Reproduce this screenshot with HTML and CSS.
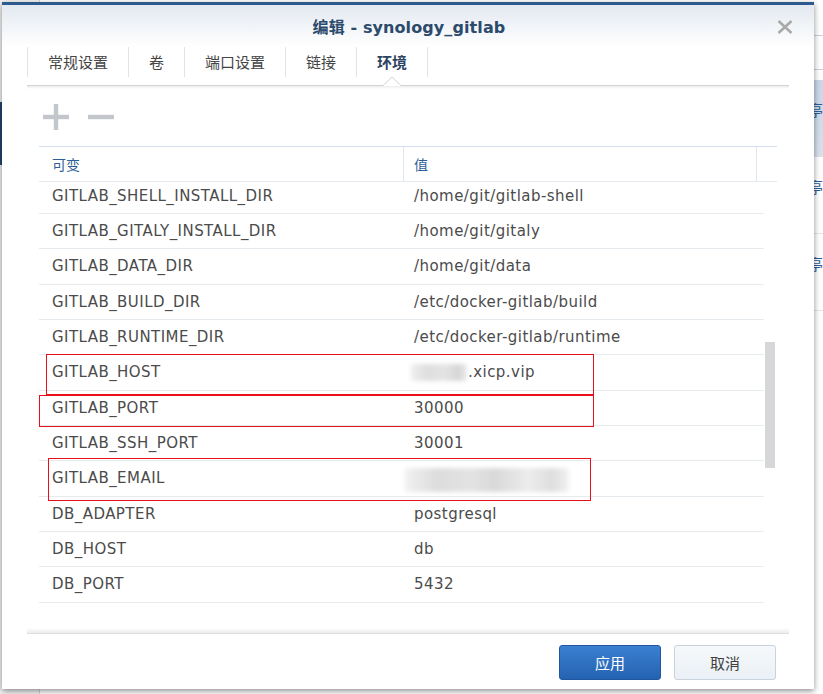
FILE: index.html
```html
<!DOCTYPE html>
<html lang="zh-CN">
<head>
<meta charset="utf-8">
<title>编辑 - synology_gitlab</title>
<link rel="stylesheet" href="styles.css">
</head>
<body>
<div class="bgpage">
  <div class="bg-side"><div class="bg-side-mark"></div></div>
  <div class="bg-main">
    <div class="bg-search"></div>
    <div class="bg-list">
      <div class="bg-row bg-row-sel">亭</div>
      <div class="bg-row">亭</div>
      <div class="bg-row">亭</div>
    </div>
  </div>
</div>

<div class="dialog">
  <div class="titlebar">
    <span></span>
    <div class="title">编辑 - synology_gitlab</div>
    <div class="close">
      <svg width="16" height="14" viewBox="0 0 16 14"><path d="M1.5 1 L14.5 13 M14.5 1 L1.5 13" stroke="#a9a9a9" stroke-width="2.6" fill="none"/></svg>
    </div>
  </div>

  <div class="tabstrip">
    <div class="tab">常规设置</div>
    <div class="tab">卷</div>
    <div class="tab">端口设置</div>
    <div class="tab">链接</div>
    <div class="tab tab-active">环境
      <svg class="caret" width="18" height="10" viewBox="0 0 18 10"><path d="M0 10 L0 9.5 L9 1 L18 9.5 L18 10 Z" fill="#fff"/><path d="M0 9.5 L9 1 L18 9.5" stroke="#d2d2d2" stroke-width="1" fill="none"/></svg>
    </div>
  </div>
  <div class="tabshadow"></div>

  <div class="content">
    <div class="toolbar">
      <svg width="26" height="26" viewBox="0 0 26 26"><rect x="0" y="10.8" width="26" height="4.4" fill="#c3c6cb"/><rect x="10.8" y="0" width="4.4" height="26" fill="#c3c6cb"/></svg>
      <svg width="26" height="26" viewBox="0 0 26 26"><rect x="0" y="10.8" width="26" height="4.4" fill="#c3c6cb"/></svg>
    </div>

    <div class="grid">
      <div class="ghead">
        <div class="hc hc1">可变</div>
        <div class="hc hc2">值</div>
        <div class="hc hc3"></div>
      </div>
      <div class="gbody">
        <div class="rows">
          <div class="row"><div class="c1">GITLAB_SHELL_INSTALL_DIR</div><div class="c2">/home/git/gitlab-shell</div></div>
          <div class="row"><div class="c1">GITLAB_GITALY_INSTALL_DIR</div><div class="c2">/home/git/gitaly</div></div>
          <div class="row"><div class="c1">GITLAB_DATA_DIR</div><div class="c2">/home/git/data</div></div>
          <div class="row"><div class="c1">GITLAB_BUILD_DIR</div><div class="c2">/etc/docker-gitlab/build</div></div>
          <div class="row"><div class="c1">GITLAB_RUNTIME_DIR</div><div class="c2">/etc/docker-gitlab/runtime</div></div>
          <div class="row"><div class="c1">GITLAB_HOST</div><div class="c2"><span class="blur blur-host"></span>.xicp.vip</div></div>
          <div class="row"><div class="c1">GITLAB_PORT</div><div class="c2">30000</div></div>
          <div class="row"><div class="c1">GITLAB_SSH_PORT</div><div class="c2">30001</div></div>
          <div class="row"><div class="c1">GITLAB_EMAIL</div><div class="c2"><span class="blur blur-mail"></span></div></div>
          <div class="row"><div class="c1">DB_ADAPTER</div><div class="c2">postgresql</div></div>
          <div class="row"><div class="c1">DB_HOST</div><div class="c2">db</div></div>
          <div class="row"><div class="c1">DB_PORT</div><div class="c2">5432</div></div>
        </div>
        <div class="scrolltrack"><div class="thumb"></div></div>
      </div>
    </div>
  </div>

  <div class="footshadow"></div>
  <div class="footer">
    <button class="btn btn-primary">应用</button>
    <button class="btn btn-default">取消</button>
  </div>
</div>

<div class="mark mark-host"></div>
<div class="mark mark-port"></div>
<div class="mark mark-mail"></div>
</body>
</html>
```
FILE: styles.css
```css
html, body {
  margin: 0;
  padding: 0;
  width: 823px;
  height: 694px;
  overflow: hidden;
  background: #ffffff;
  font-family: "DejaVu Sans", "Noto Sans CJK SC", sans-serif;
}

/* background application (behind the dialog) */
.bgpage {
  display: flex;
  height: 694px;
}
.bg-side {
  width: 46px;
  border-right: 1px solid #d6d6d6;
  background: #f2f2f2;
  padding-top: 102px;
  box-sizing: border-box;
}
.bg-side-mark {
  width: 3px;
  height: 63px;
  background: #24466f;
}
.bg-main {
  flex: 1;
  padding-left: 767px;
  padding-top: 35px;
  box-sizing: border-box;
}
.bg-search {
  height: 33px;
  border: 1px solid #c9d1da;
  border-right: none;
  margin-left: 4px;
}
.bg-list {
  margin-top: 10px;
}
.bg-row {
  height: 76px;
  border-bottom: 1px solid #e2e6ea;
  line-height: 60px;
  padding-left: 1px;
  font-family: "Noto Sans CJK SC", sans-serif;
  font-size: 15px;
  color: #2d5e95;
}
.bg-row-sel {
  background: linear-gradient(#c9d7e8, #d6e1ee);
  border-bottom: none;
  height: 77px;
}

/* dialog */
.dialog {
  position: absolute;
  left: 2px;
  top: 2px;
  width: 812px;
  height: 687px;
  box-sizing: border-box;
  border-top: 3px solid #2c5a8c;
  background: #ffffff;
  box-shadow: 0 2px 6px rgba(0, 0, 0, 0.45);
  display: flex;
  flex-direction: column;
}

.titlebar {
  height: 42px;
  flex: none;
  display: grid;
  grid-template-columns: 1fr auto 1fr;
  align-items: center;
  background: linear-gradient(#e3e9f1, #ffffff);
}
.title {
  font-family: "DejaVu Sans", "Noto Sans CJK SC", sans-serif;
  font-weight: bold;
  font-size: 16px;
  color: #2b4a6c;
  letter-spacing: 0.1px;
  padding-left: 2px;
}
.close {
  justify-self: end;
  padding-right: 21px;
  display: flex;
  padding-top: 1px;
}

.tabstrip {
  flex: none;
  margin: 0 25px;
  height: 38px;
  border-bottom: 1px solid #d3d3d3;
  display: flex;
  align-items: flex-start;
}
.tab {
  position: relative;
  height: 30px;
  line-height: 30px;
  padding: 0 20px;
  border-left: 1px solid #dde4ec;
  font-family: "Noto Sans CJK SC", sans-serif;
  font-size: 15px;
  color: #454545;
}
.tab-active {
  border-right: 1px solid #dde4ec;
  font-weight: bold;
  color: #2e4462;
}
.caret {
  position: absolute;
  left: 50%;
  margin-left: -9px;
  bottom: -9px;
  display: block;
}
.tabshadow {
  flex: none;
  margin: 0 25px;
  height: 3px;
  background: linear-gradient(#ececec, #ffffff);
}

.content {
  flex: 1;
  margin: 0 25px;
  padding: 0 12px;
  display: flex;
  flex-direction: column;
  min-height: 0;
}
.toolbar {
  margin-top: 11px;
  height: 33px;
  display: flex;
  align-items: center;
  gap: 19px;
  padding-left: 4px;
}
.grid {
  margin-top: 13px;
  flex: 1;
  display: flex;
  flex-direction: column;
  min-height: 0;
}
.ghead {
  display: flex;
  height: 36px;
  box-sizing: border-box;
  border-top: 1px solid #d3dfec;
  border-bottom: 1px solid #e3e9ef;
  flex: none;
}
.hc {
  font-family: "Noto Sans CJK SC", sans-serif;
  font-size: 14px;
  color: #2e5f96;
  line-height: 34px;
  box-sizing: border-box;
}
.hc1 {
  width: 365px;
  padding-left: 13px;
  border-right: 1px solid #dfe7f0;
}
.hc2 {
  width: 353px;
  padding-left: 10px;
  border-right: 1px solid #dfe7f0;
}
.hc3 {
  flex: 1;
}
.gbody {
  flex: 1;
  display: flex;
  overflow: hidden;
  min-height: 0;
}
.rows {
  width: 725px;
  margin-top: -3.33px;
  flex: none;
}
.row {
  display: flex;
  height: 35.33px;
  box-sizing: border-box;
  border-bottom: 1px solid #e6ebf0;
  align-items: center;
  font-size: 15px;
  letter-spacing: 0.45px;
  color: #4b4b4b;
}
.c1 {
  width: 365px;
  padding-left: 13px;
  box-sizing: border-box;
}
.c2 {
  padding-left: 10px;
  display: flex;
  align-items: center;
}
.blur {
  display: inline-block;
  filter: blur(2px);
}
.blur-host {
  width: 56px;
  height: 17px;
  margin-left: -3px;
  margin-right: 1px;
  background: linear-gradient(90deg, #eeeeee, #dedede 30%, #e4e4e4 60%, #d6d6d6 85%, #ececec);
}
.blur-mail {
  width: 164px;
  height: 24px;
  margin-left: -9px;
  margin-top: 4px;
  background: linear-gradient(90deg, #f1f1f1, #dcdcdc 20%, #e3e3e3 40%, #d9d9d9 55%, #ececec 75%, #dedede 90%, #f2f2f2);
}
.scrolltrack {
  flex: 1;
  padding-left: 1px;
}
.thumb {
  width: 10px;
  height: 126px;
  margin-top: 160px;
  background: #d6d7d9;
}

.footshadow {
  flex: none;
  margin: 0 25px;
  height: 6px;
  box-sizing: border-box;
  border-bottom: 1px solid #dedede;
  background: linear-gradient(#ffffff, #ececec);
}
.footer {
  flex: none;
  margin: 0 25px;
  padding: 11px 13px 9px 0;
  display: flex;
  justify-content: flex-end;
  gap: 13px;
}
.btn {
  width: 102px;
  height: 35px;
  border-radius: 3px;
  font-family: "Noto Sans CJK SC", sans-serif;
  font-size: 15px;
  padding: 0;
}
.btn-primary {
  background: linear-gradient(#3b80d1, #2463b1);
  border: 1px solid #2157a0;
  color: #ffffff;
}
.btn-default {
  background: linear-gradient(#f6f9fb, #eaf0f6);
  border: 1px solid #c9d3de;
  color: #3f3f3f;
}

/* red annotation boxes drawn over the screenshot */
.mark {
  position: absolute;
  border: 1.5px solid #e8101c;
  box-sizing: border-box;
}
.mark-host {
  left: 46px;
  top: 354px;
  width: 548px;
  height: 41px;
}
.mark-port {
  left: 39px;
  top: 395px;
  width: 555px;
  height: 32px;
}
.mark-mail {
  left: 48px;
  top: 458px;
  width: 543px;
  height: 43px;
}
```
